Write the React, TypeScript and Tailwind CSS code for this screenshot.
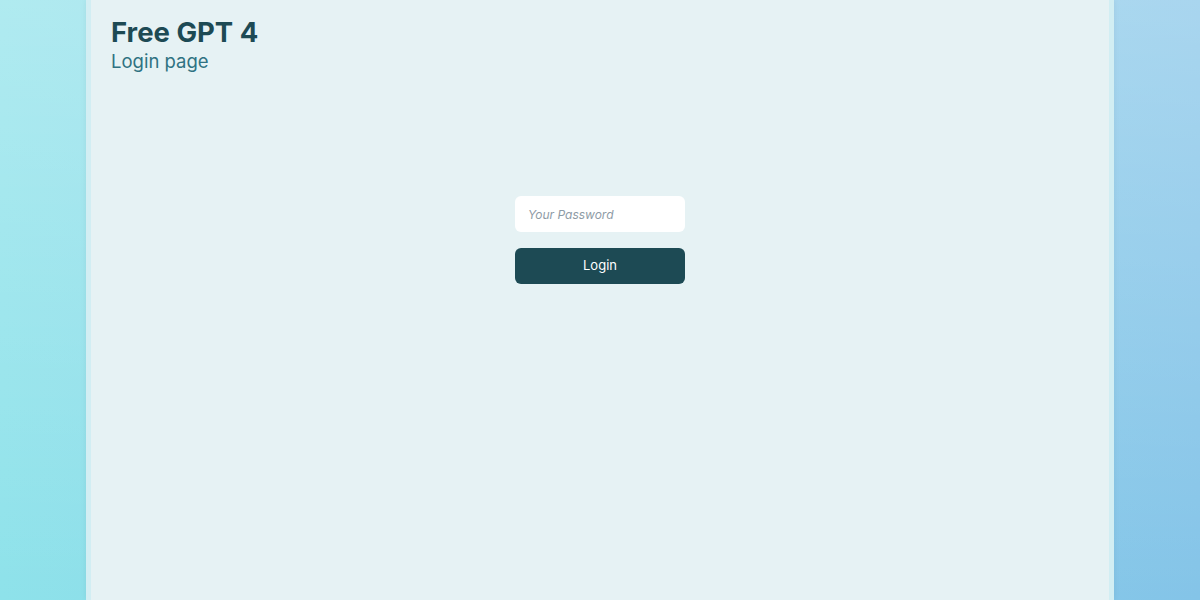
import React from "react";

export default function App() {
  return (
    <div
      className="h-[600px] w-full flex justify-center bg-[linear-gradient(to_bottom,rgba(255,255,255,0.3),rgba(255,255,255,0)),linear-gradient(to_right,#8ee2ea,#84c4e8)]"
      style={{ fontFamily: "Inter, 'Noto Sans', sans-serif" }}
    >
      <div className="w-[1028px] h-full border-x-[5px] border-[#d2eef3] bg-[#e6f2f4] shadow-[0_0_6px_rgba(0,0,0,0.06)] flex flex-col">
        <div className="pl-5 pt-[15px]">
          <h1 className="text-[27.5px] leading-[34px] font-bold text-[#1d4a54]">Free GPT 4</h1>
          <p className="text-[18.5px] leading-[24px] text-[#2f7282]">Login page</p>
        </div>
        <div className="flex flex-col items-center mt-[123px] gap-4">
          <input
            type="password"
            placeholder="Your Password"
            className="w-[170px] h-[36px] rounded-md bg-white px-[13px] text-[12px] placeholder:italic placeholder:text-[#8e9ba6] outline-none"
          />
          <button className="w-[170px] h-[36px] rounded-md bg-[#1d4a54] text-white text-[13px] font-normal">
            Login
          </button>
        </div>
      </div>
    </div>
  );
}
